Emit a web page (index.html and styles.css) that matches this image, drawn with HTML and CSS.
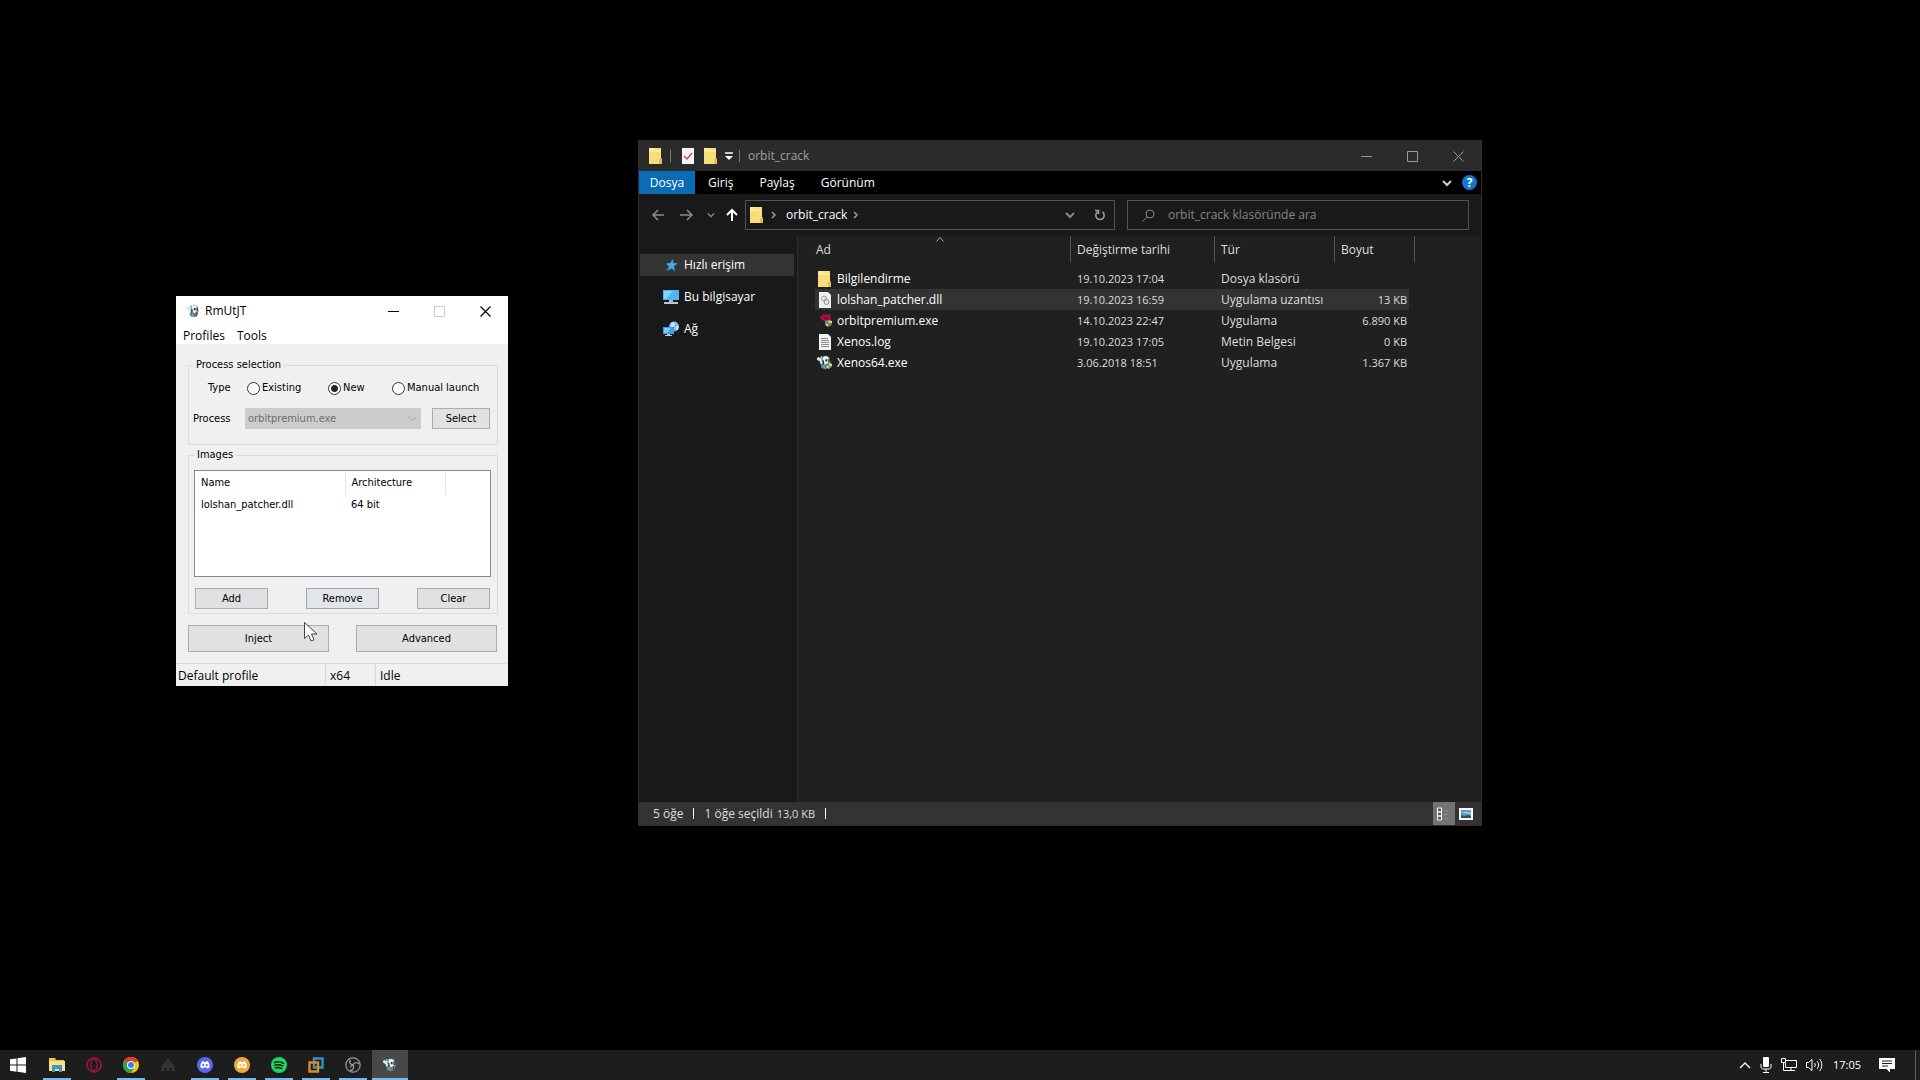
FILE: index.html
```html
<!DOCTYPE html>
<html lang="tr">
<head>
    <meta charset="UTF-8">
    <meta name="viewport" content="width=device-width, initial-scale=1.0">
    <title>orbit_crack</title>
    <link rel="stylesheet" href="styles.css">
</head>
<body>
    <!-- shared icons -->
    <svg class="defs" width="0" height="0">
        <symbol id="folder" viewBox="0 0 16 16">
            <path d="M1 0h12v10l1 1v5H1z" fill="#f8dd7c"/>
            <path d="M1 0h5l1 2h6v2H1z" fill="#ffe99a"/>
            <path d="M11 11h3v5h-3z" fill="#e3bd50"/>
        </symbol>
        <symbol id="xenos" viewBox="0 0 16 16">
            <path d="M5 2l4-1.500 4 1.500 1.500 6-1.500 5-4 2.500-4-3z" fill="#7ba5ad"/>
            <path d="M7 1.500h4l2 3-1 5-3 1-3-4z" fill="#edf3ef"/>
            <path d="M0 3h1V2h1v1h2V1h1v5l1 3-2 1-1-3-3-2z" fill="#d9ecec"/>
            <path d="M6 5l1.500 1v4L6 11zM9 4.500h2v2.500H9zM12 4h1.500v4H12z" fill="#26343c"/>
            <path d="M4 10l2.500 1 1 4-3-1.500z" fill="#3e94ae"/>
            <path d="M8 11l1.500-1 1 4-1.500 1z" fill="#b64d4a"/>
            <path d="M11 9l2.500 1-1 4-1.500 1z" fill="#375468"/>
        </symbol>
        <symbol id="shield" viewBox="0 0 8 8">
            <path d="M0 1l4-1v4H0z" fill="#3c8fd0"/>
            <path d="M4 0l4 1v3H4z" fill="#f3cf4c"/>
            <path d="M0 4h4v4L1 6z" fill="#f3cf4c"/>
            <path d="M4 4h4L7 6 4 8z" fill="#3c8fd0"/>
        </symbol>
        <symbol id="discord" viewBox="0 0 16 16">
            <circle cx="8" cy="8" r="8" fill="currentColor"/>
            <path d="M5 4.600l1.500-.5.5.8h2l.5-.8 1.500.5c1.200 1.700 1.700 3.500 1.600 5.700-.7.600-1.500 1-2.300 1.200l-.6-1.100H6.300l-.6 1.100c-.8-.2-1.600-.6-2.300-1.200C3.300 8.100 3.800 6.300 5 4.600z" fill="#fff"/>
            <circle cx="6.300" cy="8.200" r="1.100" fill="currentColor"/>
            <circle cx="9.700" cy="8.200" r="1.100" fill="currentColor"/>
        </symbol>
        <symbol id="chevron" viewBox="0 0 10 10">
            <path d="M1 3l4 4 4-4" fill="none" stroke="currentColor" stroke-width="2"/>
        </symbol>
        <symbol id="crumb" viewBox="0 0 10 10">
            <path d="M3 2l3 3-3 3" fill="none" stroke="currentColor" stroke-width="1.500"/>
        </symbol>
    </svg>

    <main class="desktop">
        <!-- injector window -->
        <section class="window injector">
            <header class="inj-title">
                <svg class="icon14"><use href="#xenos"/></svg>
                <span class="caption">RmUtJT</span>
                <button class="win-btn" aria-label="Minimize"><svg width="11" height="11"><path d="M0 5.500h11" stroke="#000"/></svg></button>
                <button class="win-btn" aria-label="Maximize" disabled><svg width="11" height="11"><path d="M.5.5h10v10H.5z" fill="none" stroke="#ccc"/></svg></button>
                <button class="win-btn" aria-label="Close"><svg width="11" height="11"><path d="M.5.5l10 10M10.500.5l-10 10" stroke="#000" stroke-width="1.200"/></svg></button>
            </header>
            <nav class="inj-menu">
                <button>Profiles</button>
                <button>Tools</button>
            </nav>
            <form class="inj-body">
                <fieldset class="process">
                    <legend>Process selection</legend>
                    <div class="type-row">
                        <span class="type-label">Type</span>
                        <label><input type="radio" name="type">Existing</label>
                        <label><input type="radio" name="type" checked>New</label>
                        <label><input type="radio" name="type">Manual launch</label>
                    </div>
                    <div class="process-row">
                        <label for="process">Process</label>
                        <div class="combo">
                            <select id="process" disabled>
                                <option>orbitpremium.exe</option>
                            </select>
                            <svg width="9" height="6"><path d="M.5.5l4 4 4-4" fill="none" stroke="#a5a5a5"/></svg>
                        </div>
                        <button type="button" class="btn">Select</button>
                    </div>
                </fieldset>
                <fieldset class="images">
                    <legend>Images</legend>
                    <div class="image-list">
                        <table>
                            <thead>
                                <tr><th class="img-name">Name</th><th class="img-arch">Architecture</th><th></th></tr>
                            </thead>
                            <tbody>
                                <tr><td>lolshan_patcher.dll</td><td>64 bit</td><td></td></tr>
                            </tbody>
                        </table>
                    </div>
                    <div class="image-buttons">
                        <button type="button" class="btn">Add</button>
                        <button type="button" class="btn hot">Remove</button>
                        <button type="button" class="btn">Clear</button>
                    </div>
                </fieldset>
                <div class="actions">
                    <button type="button" class="btn">Inject</button>
                    <button type="button" class="btn">Advanced</button>
                </div>
            </form>
            <footer class="inj-status">
                <span class="profile">Default profile</span>
                <span class="arch">x64</span>
                <span>Idle</span>
            </footer>
        </section>

        <!-- explorer window -->
        <section class="window explorer">
            <header class="exp-title">
                <svg class="icon16"><use href="#folder"/></svg>
                <i class="bar"></i>
                <svg class="icon16 props" viewBox="0 0 16 16"><path d="M2 0h12v16H2z" fill="#f4f4f4"/><path d="M4 8l3 3 5-6" fill="none" stroke="#c8504a" stroke-width="1.500"/></svg>
                <svg class="icon16 new"><use href="#folder"/></svg>
                <svg class="qat" width="8" height="8"><path d="M0 1h8" stroke="#fff" stroke-width="1.500"/><path d="M0 4h8L4 8z" fill="#fff"/></svg>
                <i class="bar"></i>
                <span class="caption">orbit_crack</span>
                <button class="win-btn" aria-label="Simge durumuna küçült"><svg width="11" height="11"><path d="M0 5.500h11" stroke="#999"/></svg></button>
                <button class="win-btn" aria-label="Ekranı kapla"><svg width="11" height="11"><path d="M.5.5h10v10H.5z" fill="none" stroke="#999"/></svg></button>
                <button class="win-btn" aria-label="Kapat"><svg width="11" height="11"><path d="M.5.5l10 10M10.500.5l-10 10" stroke="#999"/></svg></button>
            </header>
            <nav class="ribbon">
                <button class="file">Dosya</button>
                <button>Giriş</button>
                <button>Paylaş</button>
                <button>Görünüm</button>
                <svg class="expand"><use href="#chevron"/></svg>
                <span class="help">?</span>
            </nav>
            <div class="address-row">
                <div class="history">
                    <button aria-label="Geri"><svg width="14" height="12"><path d="M13 6H2M7 1L2 6l5 5" fill="none" stroke="#8a8a8a" stroke-width="1.500"/></svg></button>
                    <button aria-label="İleri"><svg width="14" height="12"><path d="M0 6h12M7 1l5 5-5 5" fill="none" stroke="#8a8a8a" stroke-width="1.500"/></svg></button>
                    <button aria-label="Son konumlar" class="recent"><svg width="8" height="8"><use href="#chevron"/></svg></button>
                    <button aria-label="Yukarı"><svg width="12" height="14"><path d="M6 13V2M1 7l5-5 5 5" fill="none" stroke="#fff" stroke-width="2"/></svg></button>
                </div>
                <div class="address">
                    <svg class="icon16"><use href="#folder"/></svg>
                    <svg class="crumb"><use href="#crumb"/></svg>
                    <span>orbit_crack</span>
                    <svg class="crumb"><use href="#crumb"/></svg>
                    <svg class="drop"><use href="#chevron"/></svg>
                    <svg class="refresh" viewBox="0 0 12 12"><path d="M3.500 3a4.200 4.200 0 1 0 5 0M1 1.500h3.500V5" fill="none" stroke="#999" stroke-width="1.600"/></svg>
                </div>
                <div class="search">
                    <svg width="13" height="13"><circle cx="8" cy="5" r="4" fill="none" stroke="#858585"/><path d="M5 8l-4.500 4.500" stroke="#858585"/></svg>
                    <input type="text" aria-label="Ara" placeholder="orbit_crack klasöründe ara">
                </div>
            </div>
            <div class="exp-body">
                <ul class="sidebar">
                    <li class="current">
                        <svg class="icon16" viewBox="0 0 16 16"><path d="M9.500 2l1 4 4.500.5-4 2.500 1 5-3.500-2.500L4.500 14l1.500-4.500-3-3 4.500-.5z" fill="#3fa9f0"/><path d="M2.500 13.500l3-3" stroke="#2b78b4"/></svg>
                        Hızlı erişim
                    </li>
                    <li>
                        <svg class="icon16" viewBox="0 0 16 16"><path d="M0 1h16v10H0z" fill="#4db5f2"/><path d="M1 2h9L3 10H1z" fill="#88d3fb"/><path d="M6 11h4v2H6z" fill="#a9bcc8"/><path d="M1 13h14v2H1z" fill="#b9c9d3"/></svg>
                        Bu bilgisayar
                    </li>
                    <li>
                        <svg class="icon16" viewBox="0 0 16 16"><circle cx="11" cy="5.500" r="5" fill="#74bfe0"/><path d="M8 2l3-1 1 3-2 3-2-1zM13 5l3 0-1 4-2 0z" fill="#c4e6ee"/><path d="M0 6h11v7H0z" fill="#3c9fe2"/><path d="M1 7h7l-4 5H1z" fill="#7cc9f6"/><path d="M4 13h3v1h2v1H2v-1h2z" fill="#b5c8d3"/></svg>
                        Ağ
                    </li>
                </ul>
                <div class="files">
                    <svg class="sort" width="8" height="5"><path d="M.5 4.500l3.500-4 3.500 4" fill="none" stroke="#aaa"/></svg>
                    <table>
                        <thead>
                            <tr>
                                <th class="col-name">Ad</th>
                                <th class="col-date">Değiştirme tarihi</th>
                                <th class="col-type">Tür</th>
                                <th class="col-size">Boyut</th>
                            </tr>
                        </thead>
                        <tbody>
                            <tr>
                                <td><svg class="icon16"><use href="#folder"/></svg>Bilgilendirme</td>
                                <td class="num">19.10.2023 17:04</td>
                                <td>Dosya klasörü</td>
                                <td class="num"></td>
                            </tr>
                            <tr class="selected">
                                <td><svg class="icon16" viewBox="0 0 16 16"><path d="M2 0h9l3 3v13H2z" fill="#efefef"/><circle cx="7" cy="6.500" r="2.500" fill="none" stroke="#999"/><circle cx="9.500" cy="10" r="2.500" fill="none" stroke="#888"/><path d="M7 6.500h.5M9.500 10h.5" stroke="#777"/></svg>lolshan_patcher.dll</td>
                                <td class="num">19.10.2023 16:59</td>
                                <td>Uygulama uzantısı</td>
                                <td class="num">13 KB</td>
                            </tr>
                            <tr>
                                <td><svg class="icon16" viewBox="0 0 16 16"><path d="M3 4l3-2.500h7.500V7L9 8v3L7 8 4 6z" fill="#b3123f"/><path d="M6 4.500h5v2H8z" fill="#6c0a28"/><use href="#shield" x="8" y="7" width="7" height="7"/></svg>orbitpremium.exe</td>
                                <td class="num">14.10.2023 22:47</td>
                                <td>Uygulama</td>
                                <td class="num">6.890 KB</td>
                            </tr>
                            <tr>
                                <td><svg class="icon16" viewBox="0 0 16 16"><path d="M2 0h9l3 3v13H2z" fill="#f2f2f2"/><path d="M4 4.500h7M4 6.500h8M4 8.500h8M4 10.500h8M4 12.500h8" stroke="#8b8b8b"/></svg>Xenos.log</td>
                                <td class="num">19.10.2023 17:05</td>
                                <td>Metin Belgesi</td>
                                <td class="num">0 KB</td>
                            </tr>
                            <tr>
                                <td><svg class="icon16" viewBox="0 0 16 16"><use href="#xenos" width="15" height="15"/><use href="#shield" x="9" y="8" width="6" height="6"/></svg>Xenos64.exe</td>
                                <td class="num">3.06.2018 18:51</td>
                                <td>Uygulama</td>
                                <td class="num">1.367 KB</td>
                            </tr>
                        </tbody>
                    </table>
                </div>
            </div>
            <footer class="exp-status">
                <span>5 öğe</span>
                <i></i>
                <span>1 öğe seçildi</span>
                <span class="size num">13,0 KB</span>
                <i></i>
                <div class="views">
                    <button class="on" aria-label="Ayrıntılar"><svg width="14" height="14"><path d="M.5 1h4v4h-4zM.5 5h4v4h-4zM.5 9h4v4h-4z" fill="#555" stroke="#fff"/><path d="M7 3.500h4M7 7.500h4M7 11.500h4" stroke="#8b8b8b"/></svg></button>
                    <button aria-label="Büyük simgeler"><svg width="14" height="12"><path d="M1 1h12v10H1z" fill="#5d9cc4" stroke="#fff" stroke-width="2"/><path d="M2 7l4 1 3-1 3 1v2H2z" fill="#30516b"/><path d="M2 4h5l5 1v1l-5-1z" fill="#d6e8f2"/></svg></button>
                </div>
            </footer>
        </section>

        <svg class="cursor" width="14" height="21"><path d="M.5.5v16l4-3.500 2.500 6 3-1.200-2.500-5.800H13z" fill="#fff" stroke="#444"/></svg>
    </main>

    <footer class="taskbar">
        <button class="start" aria-label="Başlat"><svg width="16" height="16"><path d="M0 2.300L6.500 1.400v6.200H0zM7.500 1.200L16 0v7.600H7.500zM0 8.500h6.500v6.200L0 13.800zM7.500 8.500H16V16l-8.500-1.200z" fill="#fff"/></svg></button>
        <button class="task open" aria-label="Dosya Gezgini"><svg class="icon16" viewBox="0 0 16 16"><path d="M0 1h6l1 2h8v11H0z" fill="#f2c14b"/><path d="M0 4h16v10H0z" fill="#fbe08a"/><path d="M3 8h10v7h-3v-3H6v3H3z" fill="#3f97cf"/></svg></button>
        <button class="task" aria-label="Opera GX"><svg class="icon16" viewBox="0 0 16 16"><circle cx="8" cy="8" r="7" fill="none" stroke="#8e1738" stroke-width="1.800"/><ellipse cx="8" cy="8" rx="3.200" ry="5.600" fill="none" stroke="#8e1738" stroke-width="1.500"/></svg></button>
        <button class="task open" aria-label="Chrome"><svg class="icon16" viewBox="0 0 16 16"><circle cx="8" cy="8" r="8" fill="#fbc116"/><path d="M8 8L1.070 4A8 8 0 0 1 14.930 4z" fill="#e33b2e"/><path d="M8 8L1.070 4A8 8 0 0 0 8 16l3.460-6z" fill="#2da14c"/><circle cx="8" cy="8" r="4" fill="#fff"/><circle cx="8" cy="8" r="3" fill="#3b7ded"/></svg></button>
        <button class="task" aria-label="Uygulama"><svg class="icon16" viewBox="0 0 16 16"><path d="M1 14l1-6 3-3 3-4 3 4 3 3 1 6h-3l-1-3H9v3H7v-3H5l-1 3z" fill="#343434"/></svg></button>
        <button class="task open blurple" aria-label="Discord"><svg class="icon16"><use href="#discord"/></svg></button>
        <button class="task open canary" aria-label="Discord Canary"><svg class="icon16"><use href="#discord"/></svg></button>
        <button class="task open" aria-label="Spotify"><svg class="icon16" viewBox="0 0 16 16"><circle cx="8" cy="8" r="8" fill="#1ed760"/><path d="M3.500 5.500c3-.9 6.500-.6 9 .8M4 8.200c2.600-.8 5.500-.4 7.800.8M4.400 10.800c2.200-.6 4.500-.3 6.500.8" fill="none" stroke="#111" stroke-width="1.400" stroke-linecap="round"/></svg></button>
        <button class="task open" aria-label="VMware"><svg class="icon16" viewBox="0 0 16 16"><path d="M6 1.500h8.500v9H6z" fill="none" stroke="#2f95c4" stroke-width="2.400"/><path d="M1.500 5.500H10v9H1.500z" fill="none" stroke="#e28a1c" stroke-width="2.400"/></svg></button>
        <button class="task open" aria-label="OBS"><svg class="icon16" viewBox="0 0 16 16"><circle cx="8" cy="8" r="7.200" fill="#222" stroke="#999" stroke-width="1.200"/><path d="M8 8C4.500 7.500 4 5 5.500 3M8 8c1.500-3 4.500-3 6-1M8 8c1.500 3 0 5.500-3 5.500M8 8L5 10" fill="none" stroke="#999" stroke-width="1.300"/></svg></button>
        <button class="task open active" aria-label="Xenos"><svg class="icon14"><use href="#xenos"/></svg></button>
        <div class="tray">
            <svg width="12" height="8"><path d="M1 7l5-5 5 5" fill="none" stroke="#fff" stroke-width="1.300"/></svg>
            <svg width="12" height="16"><rect x="3" y="0" width="6" height="10" rx="1" fill="#fff"/><path d="M1 7v3c0 1 1 2 2 2h6c1 0 2-1 2-2V7M6 12v3M3 15.500h6" fill="none" stroke="#fff"/></svg>
            <svg width="16" height="14"><path d="M5 2.500h10.500v7H4.500V5M10 9.500V12M6 12.500h8M2.500 5v7.500M2.500 12.500H6" fill="none" stroke="#fff"/><path d="M.5.5h4v4h-4z" fill="#222" stroke="#fff"/></svg>
            <svg width="17" height="14"><path d="M.5 4.500h2l3.500-3v11l-3.500-3h-2z" fill="none" stroke="#fff"/><path d="M8.500 5c1 1 1 3 0 4M11 3c2 2 2 6 0 8M13.500 1c3 3 3 9 0 12" fill="none" stroke="#fff"/></svg>
            <time class="num">17:05</time>
            <svg width="16" height="16"><path d="M0 1h16v11h-5v3.500L7.500 12H0z" fill="#fff"/><path d="M3 4h10M3 6.500h10M3 9h6" stroke="#222"/></svg>
        </div>
    </footer>
</body>
</html>
```
FILE: styles.css
```css
* {
    box-sizing: border-box;
}
body {
    display: flex;
    flex-direction: column;
    min-height: 100vh;
    margin: 0;
    background-color: #000;
    color: #fff;
    font-family: "Open Sans", "Noto Sans", sans-serif;
    font-size: 12px;
    line-height: 16px;
}
button, input, select {
    margin: 0;
    padding: 0;
    border: none;
    background: none;
    color: inherit;
    font: inherit;
}
svg {
    display: block;
    flex: none;
}
.defs {
    position: absolute;
}
.icon16 {
    width: 16px;
    height: 16px;
}
.icon14 {
    width: 14px;
    height: 14px;
}
.num {
    font-size: 11px;
}
.desktop {
    position: relative;
    flex: 1;
}
.window {
    position: absolute;
    display: flex;
    flex-direction: column;
}
.caption {
    flex: 1;
}
.win-btn {
    display: flex;
    align-items: center;
    justify-content: center;
    width: 46px;
    height: 30px;
}

/* injector */
.injector {
    left: 176px;
    top: 296px;
    width: 332px;
    background-color: #f0f0f0;
    color: #000;
}
.inj-title {
    display: flex;
    align-items: center;
    height: 30px;
    padding-left: 10px;
    background-color: #fff;
}
.inj-title .caption {
    padding-left: 5px;
}
.inj-menu {
    display: flex;
    gap: 12px;
    height: 18px;
    padding: 2px 0 0 7px;
    background-color: #fff;
}
.inj-body {
    padding: 14px 10px 11px 12px;
    font-family: "DejaVu Sans Condensed", "DejaVu Sans", sans-serif;
    font-size: 11px;
    line-height: 14px;
}
fieldset {
    min-width: 0;
    margin: 0;
    border: 1px solid #dcdcdc;
}
legend {
    margin-left: 1px;
    padding: 0 2px;
}
.process {
    padding: 8px 7px 15px 4px;
}
.images {
    margin-top: 3px;
    padding: 8px 6px 4px 5px;
}
.type-row {
    display: grid;
    grid-template-columns: 54px 81px 64px 1fr;
    align-items: center;
    height: 16px;
    margin-bottom: 12px;
}
.type-label {
    padding-left: 15px;
}
.type-row label {
    display: flex;
    align-items: center;
    gap: 2px;
    white-space: nowrap;
}
.type-row input {
    appearance: none;
    width: 13px;
    height: 13px;
    border: 1px solid #333;
    border-radius: 50%;
    background-color: #fff;
}
.type-row input:checked {
    background-image: radial-gradient(circle, #222 3px, #fff 4px);
}
.process-row {
    display: grid;
    grid-template-columns: 52px 1fr 58px;
    align-items: center;
}
.combo {
    position: relative;
    margin-right: 11px;
}
.combo select {
    appearance: none;
    width: 100%;
    height: 21px;
    padding-left: 3px;
    background-color: #ccc;
    color: #6d6d6d;
    opacity: 1;
}
.combo svg {
    position: absolute;
    right: 4px;
    top: 8px;
}
.btn {
    height: 21px;
    border: 1px solid #adadad;
    background-color: #e1e1e1;
}
.btn.hot {
    background-color: #e2e5e9;
    border-color: #a2a7ad;
}
.image-list {
    height: 107px;
    border: 1px solid #828790;
    background-color: #fff;
}
.image-list table {
    width: 100%;
    table-layout: fixed;
    border-collapse: collapse;
}
.image-list th, .image-list td {
    height: 20px;
    padding: 0 6px;
    font-weight: normal;
    text-align: left;
}
.image-list th {
    height: 24px;
    border-right: 1px solid #e5e5e5;
}
.image-list th:last-child {
    border-right: none;
}
.image-list .img-name {
    width: 150px;
}
.image-list .img-arch {
    width: 100px;
}
.image-buttons {
    display: flex;
    justify-content: space-between;
    margin: 11px 1px 0;
}
.image-buttons .btn {
    width: 73px;
}
.actions {
    display: flex;
    justify-content: space-between;
    margin: 11px 1px 0 0;
}
.actions .btn {
    width: 141px;
    height: 27px;
}
.inj-status {
    display: flex;
    height: 23px;
    border-top: 1px solid #d9d9d9;
    line-height: 23px;
}
.inj-status span {
    padding-left: 4px;
}
.inj-status .profile, .inj-status .arch {
    border-right: 1px solid #d9d9d9;
}
.inj-status .profile {
    width: 150px;
    padding-left: 2px;
}
.inj-status .arch {
    width: 50px;
}

/* explorer */
.explorer {
    left: 638px;
    top: 140px;
    width: 844px;
    height: 686px;
    border: 1px solid #2f2f2f;
    background-color: #191919;
}
.exp-title {
    display: flex;
    align-items: center;
    height: 30px;
    padding-left: 9px;
    background-color: #2b2b2b;
    color: #a0a0a0;
}
.bar {
    width: 1px;
    height: 12px;
    margin-left: 6px;
    background-color: #777;
}
.props {
    margin-left: 9px;
}
.new {
    margin-left: 7px;
}
.qat {
    margin-left: 6px;
}
.exp-title .bar + .caption {
    padding-left: 8px;
}
.ribbon {
    display: flex;
    align-items: center;
    height: 23px;
    padding-right: 4px;
    background-color: #000;
}
.ribbon button {
    height: 23px;
    padding: 0 13px;
}
.ribbon .file {
    width: 56px;
    padding: 0;
    background-color: #0a6cb4;
}
.expand {
    width: 10px;
    height: 10px;
    margin-left: auto;
    color: #ccc;
}
.help {
    width: 15px;
    height: 15px;
    margin-left: 10px;
    border-radius: 50%;
    background-color: #1477cf;
    font-weight: bold;
    line-height: 15px;
    text-align: center;
}
.address-row {
    display: flex;
    align-items: center;
    height: 42px;
    padding-right: 12px;
}
.history {
    display: flex;
    align-items: center;
    width: 106px;
    padding-left: 12px;
    color: #777;
}
.history button {
    margin-right: 15px;
}
.history .recent {
    margin: 0 11px 0 -2px;
}
.history button:last-child {
    margin: 0;
}
.address {
    display: flex;
    align-items: center;
    flex: 1;
    height: 30px;
    padding: 0 8px 0 3px;
    border: 1px solid #535353;
}
.crumb {
    width: 10px;
    height: 10px;
    margin: 0 7px 0 4px;
    color: #999;
}
.drop {
    width: 10px;
    height: 10px;
    margin-left: auto;
    color: #888;
}
.refresh {
    width: 12px;
    height: 12px;
    margin-left: 19px;
}
.search {
    display: flex;
    align-items: center;
    width: 342px;
    height: 30px;
    margin-left: 12px;
    padding-left: 14px;
    border: 1px solid #535353;
}
.search input {
    flex: 1;
    margin-left: 13px;
    outline: none;
}
.search input::placeholder {
    color: #858585;
    opacity: 1;
}
.exp-body {
    display: flex;
    flex: 1;
}
.sidebar {
    width: 159px;
    margin: 0;
    padding: 18px 3px 0 1px;
    border-right: 1px solid #2e2e2e;
    list-style: none;
}
.sidebar li {
    display: flex;
    align-items: center;
    gap: 5px;
    height: 22px;
    margin-bottom: 10px;
    padding-left: 23px;
}
.sidebar .current {
    background-color: #333;
}
.files {
    position: relative;
    flex: 1;
    padding-left: 17px;
    background-color: #202020;
}
.sort {
    position: absolute;
    left: 138px;
    top: 1px;
}
.files table {
    width: 600px;
    table-layout: fixed;
    border-collapse: separate;
    border-spacing: 0;
    color: #dedede;
}
.files th {
    height: 26px;
    padding: 2px 0 0 6px;
    border-right: 1px solid #555;
    font-weight: normal;
    text-align: left;
}
.files td {
    height: 21px;
    padding: 1px 0 0 6px;
}
.files th:first-child {
    padding-left: 1px;
}
.files td:first-child {
    padding-left: 2px;
    color: #fff;
}
.files tbody::before {
    content: "";
    display: block;
    height: 6px;
}
.files td svg {
    display: inline-block;
    margin-right: 4px;
    vertical-align: top;
}
.files td:last-child {
    padding-right: 8px;
    text-align: right;
}
.selected td {
    background-color: #333;
}
.selected td:last-child {
    background: linear-gradient(to left, transparent 6px, #333 6px);
}
.col-name {
    width: 256px;
}
.col-date {
    width: 144px;
}
.col-type {
    width: 120px;
}
.exp-status {
    display: flex;
    align-items: center;
    height: 23px;
    padding-left: 14px;
    background-color: #333;
    color: #dedede;
}
.exp-status i {
    width: 1px;
    height: 11px;
    margin: 0 10px;
    background-color: #fff;
}
.exp-status .size {
    margin-left: 4px;
}
.views {
    display: flex;
    margin-left: auto;
    padding-right: 4px;
}
.views button {
    display: flex;
    align-items: center;
    justify-content: center;
    width: 22px;
    height: 23px;
}
.views .on {
    background-color: #737373;
}
.cursor {
    position: absolute;
    left: 304px;
    top: 622px;
}

/* taskbar */
.taskbar {
    display: flex;
    height: 30px;
    padding-right: 4px;
    background-color: #1d1d1d;
}
.start, .task {
    display: flex;
    align-items: center;
    justify-content: center;
    width: 36px;
    height: 30px;
}
.start {
    margin-right: 3px;
}
.task {
    position: relative;
    margin-right: 1px;
}
.open::after {
    content: "";
    position: absolute;
    left: 4px;
    right: 4px;
    bottom: 0;
    height: 2px;
    background-color: #76b9ed;
}
.active {
    background-color: #484848;
}
.active::after {
    left: 0;
    right: 0;
}
.blurple {
    color: #5865f2;
}
.canary {
    color: #f2a93b;
}
.tray {
    display: flex;
    align-items: center;
    gap: 9px;
    margin-left: auto;
    padding-right: 20px;
    border-right: 1px solid #5c5c5c;
}
.tray time {
    margin: 0 9px 0 1px;
}
```
